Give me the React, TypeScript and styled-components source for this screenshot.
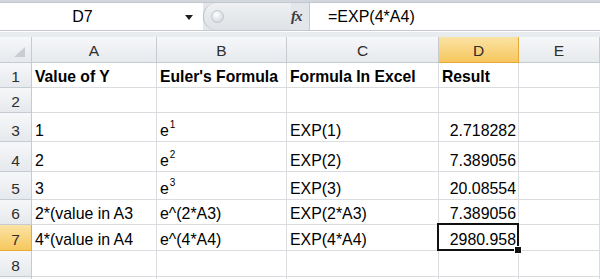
import React from 'react';
import styled, { createGlobalStyle, css } from 'styled-components';

const GlobalStyle = createGlobalStyle`
  html, body {
    margin: 0;
    padding: 0;
    background: #ffffff;
  }
  body {
    font-family: "Liberation Sans", Arial, sans-serif;
  }
`;

const COLS = ['A', 'B', 'C', 'D', 'E'];
const ROW_HEIGHTS = [25, 25, 29, 30, 28, 25, 26, 26, 26];

const Window = styled.div`
  width: 600px;
  height: 279px;
  overflow: hidden;
  background: #ffffff;
`;

const TopStrip = styled.div`
  height: 2px;
  background: #d3d7dd;
  border-bottom: 1px solid #c3c8cf;
`;

const FormulaBar = styled.div`
  height: 27px;
  display: flex;
  background: #e3e6ea;
  border-bottom: 1px solid #c3c8cf;
`;

const NameBox = styled.div`
  width: 203px;
  background: #ffffff;
  display: flex;
  align-items: center;
  font-size: 16px;
  color: #000;
`;

const NameText = styled.span`
  flex: 1;
  text-align: center;
  padding-right: 20px;
`;

const DropArrow = styled.span`
  width: 0;
  height: 0;
  border-left: 4px solid transparent;
  border-right: 4px solid transparent;
  border-top: 5px solid #1f1f1f;
  margin-right: 10px;
  margin-top: 2px;
`;

const Splitter = styled.div`
  width: 80px;
  display: flex;
  align-items: center;
  background: linear-gradient(#eef0f3, #dfe2e6);
  border-left: 1px solid #b9bec6;
  border-radius: 13px 0 0 13px;
  padding-left: 7px;
`;

const Knob = styled.span`
  width: 11px;
  height: 11px;
  border-radius: 50%;
  background: radial-gradient(circle at 40% 35%, #ffffff, #c9cdd3);
  border: 1px solid #c0c5cc;
`;

const FxButton = styled.div`
  width: 18px;
  display: flex;
  align-items: center;
  font-family: "Liberation Serif", "Times New Roman", serif;
  font-style: italic;
  font-weight: bold;
  font-size: 15px;
  color: #3b3b3b;
  letter-spacing: -1px;
  border-right: 1px solid #c3c8cf;
`;

const FormulaInput = styled.div`
  flex: 1;
  background: #ffffff;
  display: flex;
  align-items: center;
  padding-left: 18px;
  font-size: 16px;
  color: #000;
`;

const GapBand = styled.div`
  height: 5px;
  background: #e9ecef;
  border-top: 1px solid #ffffff;
`;

const Sheet = styled.div`
  display: grid;
  grid-template-columns: 32px 125px 130px 152px 80px 1fr;
  grid-template-rows: 26px ${ROW_HEIGHTS.map((h) => `${h}px`).join(' ')};
  font-size: 15.8px;
`;

const headerFill = css<{ $active?: boolean }>`
  background: ${({ $active }) =>
    $active
      ? 'linear-gradient(#fbe3a4, #f6c75f)'
      : 'linear-gradient(#f6f7f9, #e6e9ed)'};
  color: #2e2e2e;
  border-right: 1px solid ${({ $active }) => ($active ? '#e6a937' : '#c6cbd2')};
  border-bottom: 1px solid ${({ $active }) => ($active ? '#e6a937' : '#c6cbd2')};
  font-size: 15.5px;
`;

const Corner = styled.div`
  background: linear-gradient(#f6f7f9, #e6e9ed);
  border-right: 1px solid #c6cbd2;
  border-bottom: 1px solid #c6cbd2;
  display: flex;
  align-items: flex-end;
  justify-content: flex-end;
  padding: 0 6px 5px 0;
`;

const CornerMark = styled.span`
  width: 0;
  height: 0;
  border-left: 11px solid transparent;
  border-bottom: 10px solid #c9cdd3;
`;

const ColHead = styled.div<{ $active?: boolean }>`
  ${headerFill};
  display: flex;
  align-items: center;
  justify-content: center;
  padding-top: 2px;
`;

const RowHead = styled.div<{ $active?: boolean }>`
  ${headerFill};
  display: flex;
  align-items: flex-end;
  justify-content: center;
  padding-bottom: 1px;
  line-height: 18px;
`;

const Cell = styled.div<{ $bold?: boolean; $num?: boolean; $selected?: boolean }>`
  position: relative;
  border-right: 1px solid #dadcdf;
  border-bottom: 1px solid #dadcdf;
  display: flex;
  align-items: flex-end;
  justify-content: ${({ $num }) => ($num ? 'flex-end' : 'flex-start')};
  padding: 0 ${({ $num }) => ($num ? '2px' : '3px')} 1px 3px;
  white-space: nowrap;
  overflow: ${({ $selected }) => ($selected ? 'visible' : 'hidden')};
  font-weight: ${({ $bold }) => ($bold ? 'bold' : 'normal')};
  font-size: ${({ $bold }) => ($bold ? '15.7px' : '15.9px')};
  color: #000;
  line-height: 18px;

  ${({ $selected }) =>
    $selected &&
    css`
      &::after {
        content: '';
        position: absolute;
        left: -2px;
        top: -2px;
        right: -1px;
        bottom: -1px;
        border: 2.5px solid #111;
        pointer-events: none;
      }
      &::before {
        content: '';
        position: absolute;
        right: -4px;
        bottom: -4px;
        width: 6px;
        height: 6px;
        background: #111;
        border: 1px solid #fff;
        z-index: 2;
      }
    `}
`;

const Sup = styled.sup`
  font-size: 10px;
  vertical-align: 8px;
  line-height: 0;
  margin-left: 1px;
`;

type CellData = { text: React.ReactNode; bold?: boolean; num?: boolean };

const power = (n: number) => (
  <span>
    e<Sup>{n}</Sup>
  </span>
);

const blank = (): CellData[] => COLS.map(() => ({ text: '' }));

const rows: CellData[][] = [
  [
    { text: 'Value of Y', bold: true },
    { text: "Euler's Formula", bold: true },
    { text: 'Formula In Excel', bold: true },
    { text: 'Result', bold: true },
    { text: '' },
  ],
  blank(),
  [{ text: '1' }, { text: power(1) }, { text: 'EXP(1)' }, { text: '2.718282', num: true }, { text: '' }],
  [{ text: '2' }, { text: power(2) }, { text: 'EXP(2)' }, { text: '7.389056', num: true }, { text: '' }],
  [{ text: '3' }, { text: power(3) }, { text: 'EXP(3)' }, { text: '20.08554', num: true }, { text: '' }],
  [
    { text: '2*(value in A3' },
    { text: 'e^(2*A3)' },
    { text: 'EXP(2*A3)' },
    { text: '7.389056', num: true },
    { text: '' },
  ],
  [
    { text: '4*(value in A4' },
    { text: 'e^(4*A4)' },
    { text: 'EXP(4*A4)' },
    { text: '2980.958', num: true },
    { text: '' },
  ],
  blank(),
  blank(),
];

const ACTIVE_ROW = 7;
const ACTIVE_COL = 'D';
const VISIBLE_ROW_LABELS = 8;

export default function App() {
  return (
    <Window>
      <GlobalStyle />
      <TopStrip />
      <FormulaBar>
        <NameBox>
          <NameText>D7</NameText>
          <DropArrow />
        </NameBox>
        <Splitter>
          <Knob />
        </Splitter>
        <FxButton>fx</FxButton>
        <FormulaInput>=EXP(4*A4)</FormulaInput>
      </FormulaBar>
      <GapBand />
      <Sheet>
        <Corner>
          <CornerMark />
        </Corner>
        {COLS.map((c) => (
          <ColHead key={c} $active={c === ACTIVE_COL}>
            {c}
          </ColHead>
        ))}
        {rows.map((row, r) => (
          <React.Fragment key={r}>
            <RowHead $active={r + 1 === ACTIVE_ROW}>
              {r < VISIBLE_ROW_LABELS ? r + 1 : ''}
            </RowHead>
            {row.map((cell, c) => (
              <Cell
                key={c}
                $bold={cell.bold}
                $num={cell.num}
                $selected={r + 1 === ACTIVE_ROW && COLS[c] === ACTIVE_COL}
              >
                {cell.text}
              </Cell>
            ))}
          </React.Fragment>
        ))}
      </Sheet>
    </Window>
  );
}
